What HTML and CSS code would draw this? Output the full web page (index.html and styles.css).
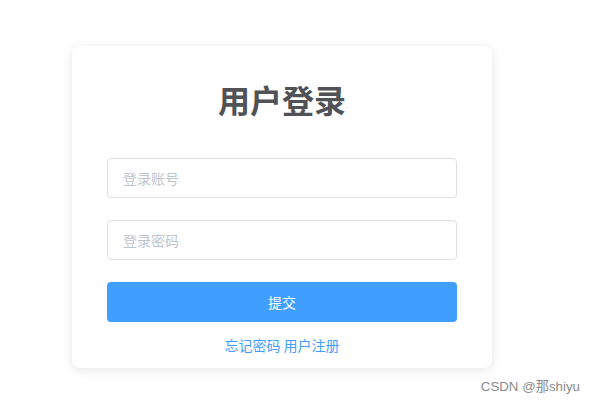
FILE: index.html
```html
<!DOCTYPE html>
<html>
    <head>
        <meta charset="utf-8">
        <title>用户登录</title>
        <link rel="stylesheet" href="styles.css">
    </head>
    <body>
        <div class="login_box">
            <h1 class="login_title">用户登录</h1>
            <input class="login_input" type="text" placeholder="登录账号"/>
            <input class="login_input" type="password" placeholder="登录密码"/>
            <button class="login_btn" type="button">提交</button>
            <div class="login_links"><a href="#">忘记密码</a> <a href="#">用户注册</a></div>
        </div>
        <div class="mark">CSDN @那shiyu</div>
    </body>
</html>
```

FILE: styles.css
```css
body {
    margin:0;
    background:#fff;
    font-family:"Microsoft YaHei", "Noto Sans CJK SC", sans-serif;
    width:593px;
    height:402px;
    position:relative;
    overflow:hidden;
}
.login_box {
    box-sizing:border-box;
    width:420px;
    margin:46px 0 0 72px;
    padding:33px 35px 13px;
    background:#fff;
    border-radius:8px;
    box-shadow:0 2px 12px rgba(0,0,0,0.1);
    display:flex;
    flex-direction:column;
}
.login_title {
    margin:0 0 39px;
    font-size:32px;
    line-height:40px;
    text-align:center;
    color:#505255;
    font-weight:bold;
}
.login_input {
    box-sizing:border-box;
    height:40px;
    margin-bottom:22px;
    padding:0 15px;
    border:1px solid #dcdfe6;
    border-radius:4px;
    font-size:14px;
    font-family:inherit;
    color:#606266;
    outline:none;
}
.login_input::placeholder {
    color:#c0c4cc;
}
.login_btn {
    height:40px;
    border:0;
    border-radius:4px;
    background:#409eff;
    color:#fff;
    font-size:14px;
    font-family:inherit;
}
.login_links {
    margin-top:13px;
    line-height:20px;
    text-align:center;
    font-size:14px;
}
.login_links a {
    color:#409eff;
    text-decoration:none;
}
.mark {
    position:absolute;
    right:13px;
    top:376px;
    font-family:"Liberation Sans", "Noto Sans CJK SC", sans-serif;
    font-size:13.3px;
    color:#8a8a8a;
}
```
